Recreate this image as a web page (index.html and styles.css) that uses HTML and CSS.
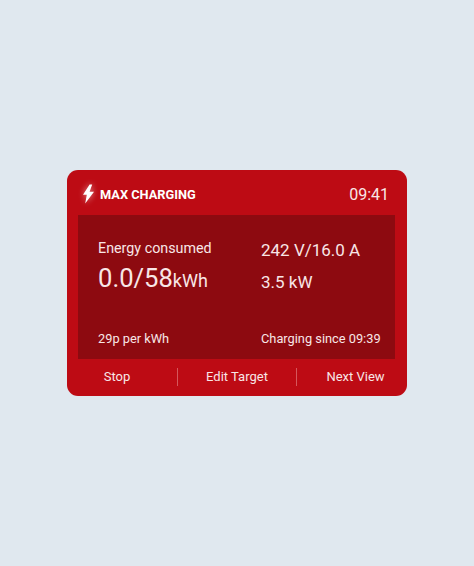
FILE: index.html
```html
<!DOCTYPE html>
<html lang="en">
<head>
    <meta charset="UTF-8">
    <meta name="viewport" content="width=device-width, initial-scale=1.0">
    <title>Max Charging</title>
    <link rel="stylesheet" href="styles.css">
</head>
<body>

<div class="card">
    <header class="card-header">
        <div class="status">
            <span class="bolt-wrap">
                <svg class="bolt" width="13" height="20" viewBox="0 0 13 20">
                    <path d="M7.6 0.5 L1 10.8 H4.8 L3.2 19.5 L12 7.8 H7.6 L10.2 0.5 Z" fill="#ffffff"/>
                </svg>
            </span>
            <span class="status-text">MAX CHARGING</span>
        </div>
        <span class="clock">09:41</span>
    </header>

    <main class="panel">
        <div class="col col-left">
            <div>
                <p class="label">Energy consumed</p>
                <p class="energy">0.0/58<span class="unit">kWh</span></p>
            </div>
            <p class="small">29p per kWh</p>
        </div>
        <div class="col col-right">
            <div>
                <p class="reading">242 V/16.0 A</p>
                <p class="reading reading-power">3.5 kW</p>
            </div>
            <p class="small">Charging since 09:39</p>
        </div>
    </main>

    <nav class="actions">
        <a class="action action-stop" href="#stop">Stop</a>
        <a class="action action-edit" href="#edit">Edit Target</a>
        <a class="action action-next" href="#next">Next View</a>
    </nav>
</div>

</body>
</html>
```

FILE: styles.css
```css
* {
    box-sizing: border-box;
}
body {
    font-family: Roboto, "Liberation Sans", sans-serif;
    margin: 0;
    height: 566px;
    background-color: #e0e8ef;
    display: flex;
    align-items: center;
    justify-content: center;
    overflow: hidden;
}
p {
    margin: 0;
}
.card {
    width: 340px;
    height: 226px;
    background-color: #bd0b14;
    border-radius: 11px;
    color: #f8e6e6;
    display: flex;
    flex-direction: column;
}
.card-header {
    height: 45px;
    padding: 3px 18px 0 15px;
    display: flex;
    align-items: center;
    justify-content: space-between;
}
.status {
    display: flex;
    align-items: center;
    gap: 5px;
}
.bolt-wrap {
    display: flex;
    filter: drop-shadow(0 0 3px rgba(255, 255, 255, 0.55));
}
.status-text {
    font-size: 12.8px;
    font-weight: 700;
    color: #ffffff;
}
.clock {
    font-size: 16px;
}
.panel {
    height: 144px;
    margin: 0 12px 0 11px;
    padding: 23px 0 11px 20px;
    background-color: #8d0a10;
    display: flex;
}
.col {
    display: flex;
    flex-direction: column;
    justify-content: space-between;
}
.col-left {
    width: 163px;
    flex-shrink: 0;
}
.label {
    font-size: 14.3px;
    line-height: 20px;
}
.energy {
    font-size: 25.6px;
    line-height: 30px;
    margin-top: 5px;
}
.unit {
    font-size: 18px;
}
.reading {
    font-size: 17px;
    line-height: 24px;
}
.reading-power {
    margin-top: 8px;
}
.small {
    font-size: 12.8px;
    line-height: 18px;
    white-space: nowrap;
}
.actions {
    flex: 1;
    display: flex;
    align-items: center;
    padding-bottom: 1px;
}
.action {
    height: 18px;
    font-size: 13px;
    line-height: 18px;
    color: #f8e6e6;
    text-decoration: none;
    text-align: center;
}
.action-stop {
    width: 110px;
    padding-right: 10px;
}
.action-edit {
    width: 120px;
    border-left: 1px solid #d5575c;
    border-right: 1px solid #d5575c;
}
.action-next {
    flex: 1;
    padding-left: 7px;
}
```
